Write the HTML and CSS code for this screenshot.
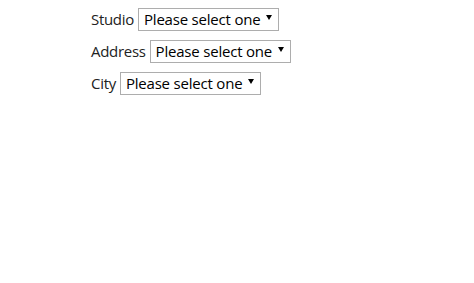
FILE: index.html
```html
<!DOCTYPE html>
<html>
<head>
<meta charset="utf-8">
<link rel="stylesheet" href="styles.css">
</head>
<body>
<div class="form">
  <div class="row"><span class="label">Studio</span><div class="select"><span class="value">Please select one</span><span class="arrow"></span></div></div>
  <div class="row"><span class="label">Address</span><div class="select"><span class="value">Please select one</span><span class="arrow"></span></div></div>
  <div class="row"><span class="label">City</span><div class="select"><span class="value">Please select one</span><span class="arrow"></span></div></div>
</div>
</body>
</html>
```
FILE: styles.css
```css
html, body {
  margin: 0;
  padding: 0;
  background: #ffffff;
}
body {
  font-family: "Open Sans", "Noto Sans", sans-serif;
  font-size: 15px;
  color: #222222;
}
.form {
  padding: 8px 0 0 91px;
  display: flex;
  flex-direction: column;
  gap: 9px;
}
.row {
  display: flex;
  align-items: center;
  gap: 4px;
  height: 23px;
}
.label {
  letter-spacing: -0.3px;
  margin-top: -2px;
}
.select {
  box-sizing: border-box;
  height: 23px;
  border: 1px solid #adadad;
  background: #ffffff;
  display: flex;
  align-items: center;
  padding: 0 6px 0 5px;
  color: #000000;
}
.value {
  letter-spacing: -0.2px;
  margin-top: -2px;
}
.arrow {
  margin-left: 6px;
  width: 0;
  height: 0;
  border-left: 3px solid transparent;
  border-right: 3px solid transparent;
  border-top: 5px solid #000000;
  margin-bottom: 5px;
}
```
